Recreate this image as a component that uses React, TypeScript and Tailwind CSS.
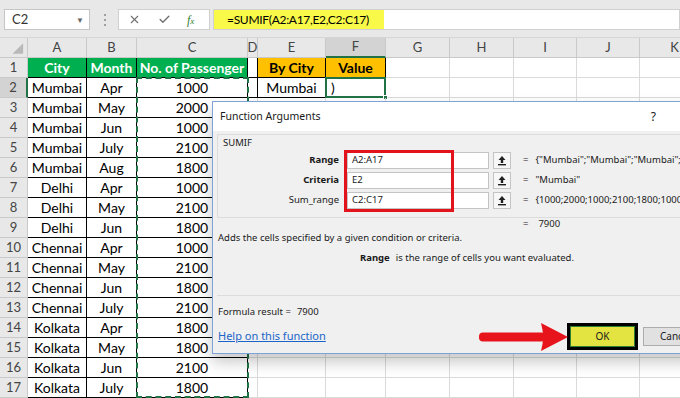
import { X, Check } from "lucide-react";

const cols = [
  "w-[28px]",
  "w-[59px]",
  "w-[50px]",
  "w-[111px]",
  "w-[10px]",
  "w-[68px]",
  "w-[60px]",
  "w-[64px]",
  "w-[64px]",
  "w-[63px]",
  "w-[63px]",
  "w-[70px]",
];
const letters = ["", "A", "B", "C", "D", "E", "F", "G", "H", "I", "J", "K"];

const data = [
  ["Mumbai", "Apr", "1000"],
  ["Mumbai", "May", "2000"],
  ["Mumbai", "Jun", "1000"],
  ["Mumbai", "July", "2100"],
  ["Mumbai", "Aug", "1800"],
  ["Delhi", "Apr", "1000"],
  ["Delhi", "May", "2100"],
  ["Delhi", "Jun", "1800"],
  ["Chennai", "Apr", "1000"],
  ["Chennai", "May", "2100"],
  ["Chennai", "Jun", "1800"],
  ["Chennai", "July", "2100"],
  ["Kolkata", "Apr", "1800"],
  ["Kolkata", "May", "1800"],
  ["Kolkata", "Jun", "2100"],
  ["Kolkata", "July", "1800"],
];

const cell = "shrink-0 h-full flex items-center justify-center border-r border-b";
const grid = "border-[#dadada]";
const boxed = "border-black";

function CollapseIcon() {
  return (
    <svg width="10" height="11" viewBox="0 0 10 11">
      <path d="M5 1 L1.5 5 H3.8 V8 H6.2 V5 H8.5 Z" fill="#222" />
      <rect x="1" y="9" width="8" height="1.4" fill="#222" />
    </svg>
  );
}

function ArgRow({ label, bold, value, result }: { label: string; bold?: boolean; value: string; result: string }) {
  return (
    <div className="flex items-center h-[20px]">
      <div className={`shrink-0 w-[121px] text-right ${bold ? "font-bold" : ""}`}>{label}</div>
      <div className="shrink-0 ml-[8px] w-[142px] h-[17px] bg-white border border-[#c4c4c4] flex items-center px-[4px]">
        {value}
      </div>
      <div className="shrink-0 ml-[4px] w-[18px] h-[17px] bg-[#f7f7f7] border border-[#c4c4c4] flex items-center justify-center">
        <CollapseIcon />
      </div>
      <div className="shrink-0 ml-[12px]">=</div>
      <div className="shrink-0 ml-[7px] whitespace-nowrap">{result}</div>
    </div>
  );
}

function Dialog() {
  return (
    <div className="absolute left-[212px] top-[101px] w-[516px] h-[253px] overflow-hidden bg-[#f0f0f0] border border-[#7ea3d6] shadow-[0_8px_14px_rgba(0,0,0,0.22)] font-['Noto_Sans',sans-serif] text-[9.5px] text-[#1a1a1a]">
      <div className="h-[29px] bg-white flex items-center pl-[7px] text-[10.5px]">
        <span>Function Arguments</span>
        <span className="ml-auto mr-[71px] text-[12px]">?</span>
      </div>
      <div className="mx-[4px] mt-[3px] h-[84px] border border-[#dcdcdc] relative">
        <div className="h-[15px] pl-[5px] pt-[1px] flex items-center">SUMIF</div>
        <ArgRow label="Range" bold value="A2:A17" result={'{"Mumbai";"Mumbai";"Mumbai";"Mumbai";"Mumbai";"Delhi"'} />
        <ArgRow label="Criteria" bold value="E2" result={'"Mumbai"'} />
        <ArgRow label="Sum_range" value="C2:C17" result="{1000;2000;1000;2100;1800;1000;2100;1800}" />
        <div className="absolute left-[126px] top-[15px] w-[110px] h-[62px] border-[3px] border-[#e3131b]" />
      </div>
      <div className="h-[12px] flex items-center pl-[310px]">
        <span>=</span>
        <span className="ml-[10px]">7900</span>
      </div>
      <div className="mt-[1px] h-[14px] flex items-center pl-[5px]">
        Adds the cells specified by a given condition or criteria.
      </div>
      <div className="mt-[6px] h-[14px] flex items-center pl-[147px] whitespace-nowrap">
        <span className="font-bold">Range</span>
        <span className="ml-[6px]">is the range of cells you want evaluated.</span>
      </div>
      <div className="mt-[30px] mx-[4px] border-t border-[#dcdcdc]" />
      <div className="mt-[9px] h-[14px] flex items-center pl-[5px]">
        <span>Formula result =</span>
        <span className="ml-[6px]">7900</span>
      </div>
      <div className="mt-[4px] h-[27px] flex items-center pl-[5px] pr-[9px]">
        <span className="text-[#1a64c8] underline text-[11px]">Help on this function</span>
        <div className="ml-auto w-[71px] h-[27px] border-[3px] border-black bg-[#2f7d32] p-[1px]">
          <div className="w-full h-full bg-[#e3e342] flex items-center justify-center text-[10px]">OK</div>
        </div>
        <div className="ml-[5px] w-[75px] h-[19px] bg-[#e1e1e1] border border-[#adadad] flex items-center pl-[16px] text-[10px]">
          Cancel
        </div>
      </div>
    </div>
  );
}

export default function App() {
  return (
    <div className="relative w-[680px] h-[398px] overflow-hidden bg-white font-['Lato',sans-serif]">
      {/* formula bar */}
      <div className="h-[38px] bg-[#e8e8e8] flex pt-[9px] border-b border-[#d6d6d6]">
        <div className="ml-[4px] w-[86px] h-[21px] bg-white border border-[#c6c6c6] flex items-center pl-[7px] text-[13px] text-[#333]">
          C2
          <span className="ml-auto mr-[5px] text-[8px] text-[#666]">▼</span>
        </div>
        <div className="ml-[13px] w-[4px] h-[21px] flex flex-col items-center justify-center gap-[3px]">
          <div className="w-[2px] h-[2px] bg-[#a0a0a0]" />
          <div className="w-[2px] h-[2px] bg-[#a0a0a0]" />
          <div className="w-[2px] h-[2px] bg-[#a0a0a0]" />
        </div>
        <div className="ml-[11px] w-[92px] h-[21px] bg-white border border-[#d0d0d0] flex items-center">
          <X className="ml-[9px] text-[#707070]" size={13} strokeWidth={2} />
          <Check className="ml-[17px] text-[#707070]" size={13} strokeWidth={2.5} />
          <span className="ml-[16px] text-[12px] italic text-[#2e7d32] font-['Liberation_Serif',serif]">
            f<span className="text-[9px]">x</span>
          </span>
        </div>
        <div className="ml-[3px] flex-1 h-[21px] bg-white border border-[#d0d0d0] flex">
          <div className="w-[170px] h-full bg-[#f9f94a] flex items-center pl-[13px] text-[12px] tracking-[-0.3px] text-black whitespace-nowrap">
            =SUMIF(A2:A17,E2,C2:C17)
          </div>
        </div>
      </div>

      {/* column headers */}
      <div className="h-[20px] flex bg-[#e8e8e8] text-[13px] text-[#444]">
        {letters.map((l, i) => (
          <div
            key={i}
            className={`${cols[i]} ${cell} border-[#c9c9c9] ${l === "F" ? "bg-[#d3d3d3] border-b-2 border-b-[#217346]" : ""}`}
          >
            {i === 0 ? (
              <svg width="28" height="20" viewBox="0 0 28 20">
                <path d="M24 5 L24 16 L13 16 Z" fill="#b9b9b9" />
              </svg>
            ) : (
              l
            )}
          </div>
        ))}
      </div>

      {/* row 1 */}
      <div className="h-[20px] flex text-[14px]">
        <div className={`${cols[0]} ${cell} bg-[#e8e8e8] border-[#c9c9c9] text-[13px] text-[#444]`}>1</div>
        <div className={`${cols[1]} ${cell} ${boxed} bg-[#00b050] text-white font-bold`}>City</div>
        <div className={`${cols[2]} ${cell} ${boxed} bg-[#00b050] text-white font-bold`}>Month</div>
        <div className={`${cols[3]} ${cell} ${boxed} bg-[#00b050] text-white font-bold whitespace-nowrap`}>No. of Passenger</div>
        <div className={`${cols[4]} ${cell} ${boxed}`} />
        <div className={`${cols[5]} ${cell} ${boxed} bg-[#ffc000] font-bold`}>By City</div>
        <div className={`${cols[6]} ${cell} ${boxed} bg-[#ffc000] font-bold`}>Value</div>
        {cols.slice(7).map((c, i) => (
          <div key={i} className={`${c} ${cell} ${grid}`} />
        ))}
      </div>

      {/* data rows */}
      {data.map((r, idx) => {
        const n = idx + 2;
        return (
          <div key={n} className="h-[20px] flex text-[14px] text-black">
            <div
              className={`${cols[0]} ${cell} text-[13px] text-[#444] ${
                n === 2 ? "bg-[#d3d3d3] border-[#c9c9c9] border-r-2 border-r-[#217346]" : "bg-[#e8e8e8] border-[#c9c9c9]"
              }`}
            >
              {n}
            </div>
            <div className={`${cols[1]} ${cell} ${boxed}`}>{r[0]}</div>
            <div className={`${cols[2]} ${cell} ${boxed}`}>{r[1]}</div>
            <div className={`${cols[3]} ${cell} ${boxed}`}>{r[2]}</div>
            <div className={`${cols[4]} ${cell} ${n === 2 ? boxed : grid}`} />
            <div className={`${cols[5]} ${cell} ${n === 2 ? boxed : grid}`}>{n === 2 ? "Mumbai" : ""}</div>
            <div className={`${cols[6]} ${cell} ${n === 2 ? boxed : grid} relative justify-start`}>
              {n === 2 && (
                <>
                  <span className="pl-[5px]">)</span>
                  <div className="absolute -left-[1px] -top-[1px] w-[61px] h-[21px] border-2 border-[#217346]" />
                  <div className="absolute -right-[3px] -bottom-[3px] w-[5px] h-[5px] bg-[#217346] border border-white" />
                </>
              )}
            </div>
            {cols.slice(7).map((c, i) => (
              <div key={i} className={`${c} ${cell} ${grid}`} />
            ))}
          </div>
        );
      })}

      {/* copy marquee around C2:C17 */}
      <div className="absolute left-[136px] top-[77px] w-[113px] h-[321px] border-2 border-dashed border-[#217346]" />

      <Dialog />

      {/* pointer arrow */}
      <svg className="absolute left-[479px] top-[323px]" width="90" height="28" viewBox="0 0 90 28">
        <rect x="0" y="9.5" width="66" height="9" rx="4" fill="#e8141c" />
        <path d="M62 0 L89 14 L62 28 Q66 14 62 0 Z" fill="#e8141c" />
      </svg>
    </div>
  );
}
